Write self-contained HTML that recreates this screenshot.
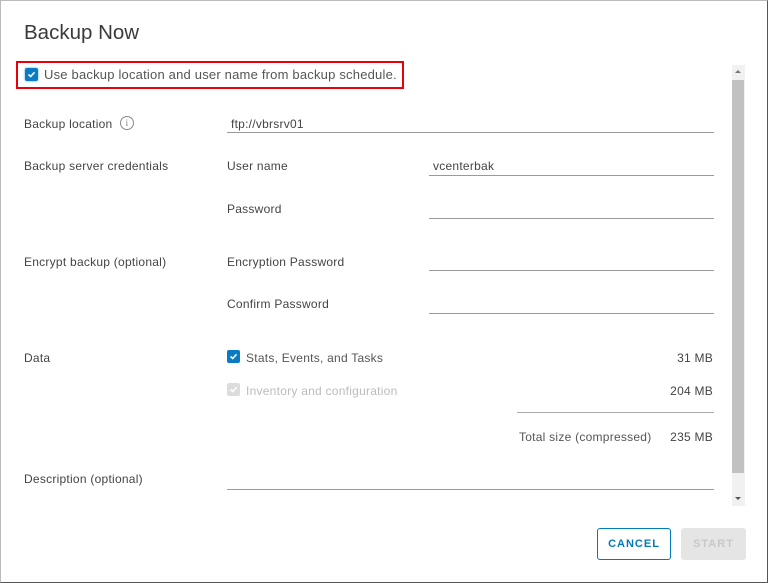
<!DOCTYPE html>
<html><head><style>
*{margin:0;padding:0;box-sizing:border-box}
body{width:768px;height:583px;background:#fff;font-family:"Liberation Sans",sans-serif;color:#444;font-size:12px;letter-spacing:0.25px;position:relative;overflow:hidden}
.b{position:absolute;border:1px solid #555;border-left:1px solid #bbb;border-top:1px solid #bbb;left:0;top:0;width:768px;height:583px}
.a{position:absolute;white-space:nowrap}
.ln{position:absolute;height:1px;background:#9a9a9a}
.cb{position:absolute;width:13px;height:13px;border-radius:2px;background:#0a7ac2}
.cb svg{position:absolute;left:2px;top:2px}
</style></head><body>
<div class="b"></div>
<div class="a" style="left:24px;top:21px;font-size:20.5px;letter-spacing:0;color:#3a3a3a">Backup Now</div>
<div class="a" style="left:16px;top:61px;width:388px;height:28px;border:2px solid #e8000b"></div>
<div class="cb" style="left:25px;top:68px;box-shadow:0 0 2px #4aa3e0"><svg width="9" height="9" viewBox="0 0 9 9"><path d="M1.5 4.5 L3.7 6.5 L7.5 2.3" stroke="#fff" stroke-width="1.6" fill="none"/></svg></div>
<div class="a" style="left:44px;top:67px;font-size:13px;letter-spacing:0.2px;color:#555">Use backup location and user name from backup schedule.</div>

<div class="a" style="left:24px;top:117px">Backup location</div>
<div class="a" style="left:120px;top:116px;width:14px;height:14px;border:1px solid #888;border-radius:50%;font-size:9px;text-align:center;line-height:12px;color:#777;font-family:'Liberation Serif',serif">i</div>
<div class="a" style="left:231px;top:117px">ftp://vbrsrv01</div>
<div class="ln" style="left:227px;top:132px;width:487px"></div>

<div class="a" style="left:24px;top:159px">Backup server credentials</div>
<div class="a" style="left:227px;top:159px">User name</div>
<div class="a" style="left:433px;top:159px">vcenterbak</div>
<div class="ln" style="left:429px;top:175px;width:285px"></div>
<div class="a" style="left:227px;top:202px">Password</div>
<div class="ln" style="left:429px;top:218px;width:285px"></div>

<div class="a" style="left:24px;top:255px">Encrypt backup (optional)</div>
<div class="a" style="left:227px;top:255px">Encryption Password</div>
<div class="ln" style="left:429px;top:270px;width:285px"></div>
<div class="a" style="left:227px;top:297px">Confirm Password</div>
<div class="ln" style="left:429px;top:313px;width:285px"></div>

<div class="a" style="left:24px;top:351px">Data</div>
<div class="cb" style="left:227px;top:350px"><svg width="9" height="9" viewBox="0 0 9 9"><path d="M1.5 4.5 L3.7 6.5 L7.5 2.3" stroke="#fff" stroke-width="1.6" fill="none"/></svg></div>
<div class="a" style="left:246px;top:351px;color:#555">Stats, Events, and Tasks</div>
<div class="a" style="right:55px;top:351px">31 MB</div>
<div class="cb" style="left:227px;top:383px;background:#ddd"><svg width="9" height="9" viewBox="0 0 9 9"><path d="M1.5 4.5 L3.7 6.5 L7.5 2.3" stroke="#fff" stroke-width="1.6" fill="none"/></svg></div>
<div class="a" style="left:246px;top:384px;color:#bbb">Inventory and configuration</div>
<div class="a" style="right:55px;top:384px">204 MB</div>
<div class="ln" style="left:517px;top:412px;width:197px;background:#aaa"></div>
<div class="a" style="left:519px;top:430px;color:#555">Total size (compressed)</div>
<div class="a" style="right:55px;top:430px">235 MB</div>

<div class="a" style="left:24px;top:472px">Description (optional)</div>
<div class="ln" style="left:227px;top:489px;width:487px"></div>

<div class="a" style="left:732px;top:65px;width:13px;height:441px;background:#f1f1f1"></div>
<div class="a" style="left:732px;top:80px;width:12px;height:393px;background:#c1c1c1"></div>
<div class="a" style="left:735px;top:70px;width:0;height:0;border-left:3px solid transparent;border-right:3px solid transparent;border-bottom:3px solid #777"></div>
<div class="a" style="left:735px;top:497px;width:0;height:0;border-left:3px solid transparent;border-right:3px solid transparent;border-top:3px solid #555"></div>

<div class="a" style="left:597px;top:528px;width:74px;height:32px;border:1px solid #0079b8;border-radius:3px;color:#0079b8;font-size:11px;letter-spacing:1px;text-align:center;line-height:30px;font-weight:bold">CANCEL</div>
<div class="a" style="left:681px;top:528px;width:65px;height:32px;background:#e5e5e5;border-radius:3px;color:#c8c8c8;font-size:11px;letter-spacing:1px;text-align:center;line-height:32px;font-weight:bold">START</div>
</body></html>
